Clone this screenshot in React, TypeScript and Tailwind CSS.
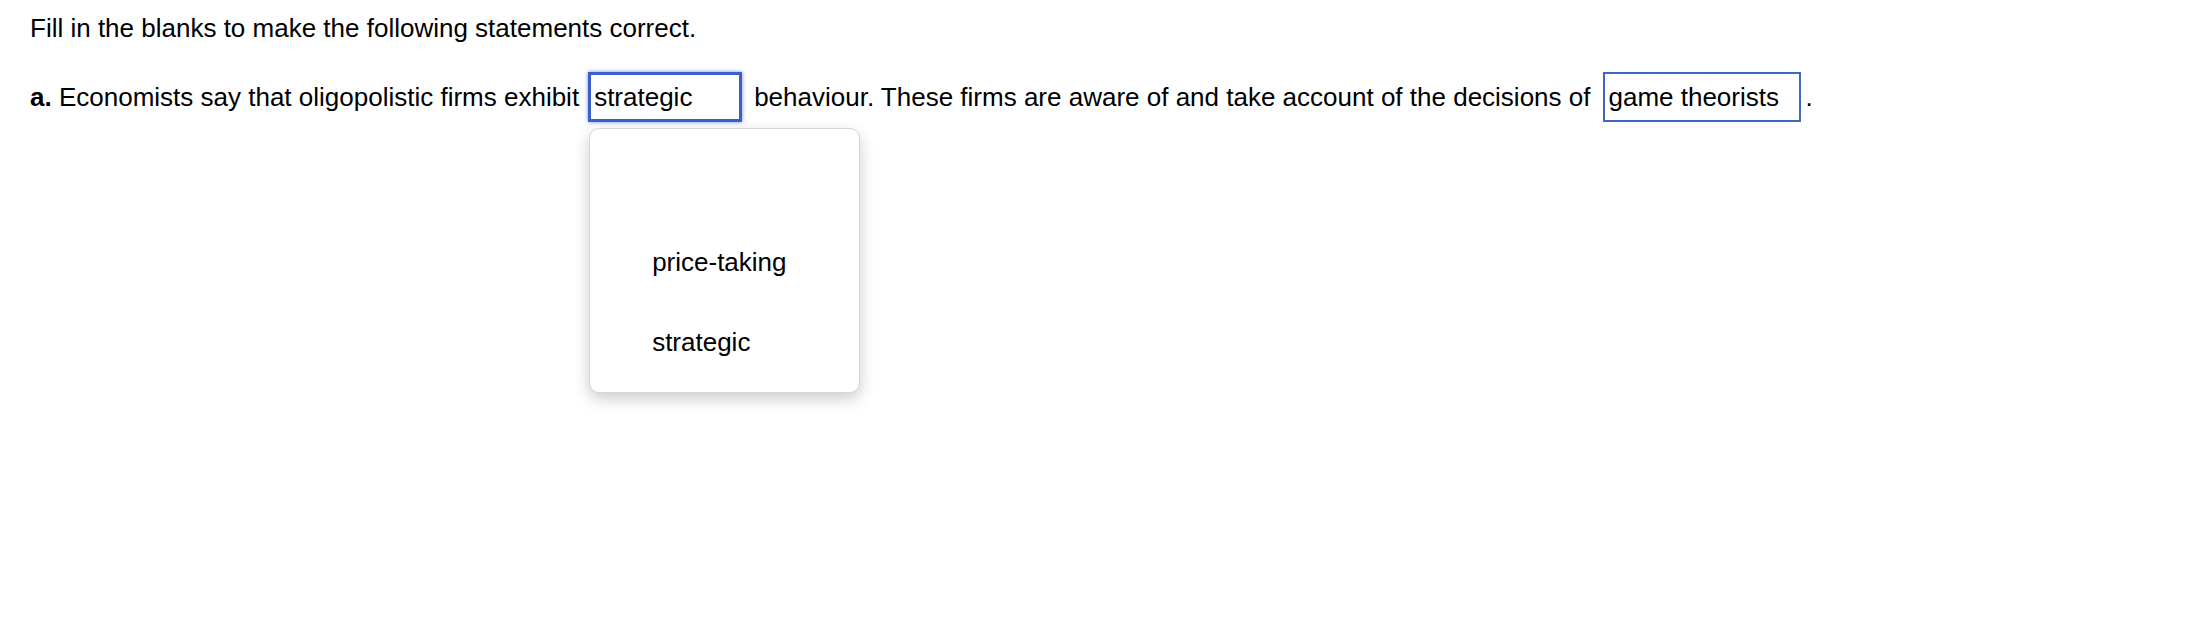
import React from "react";

export default function App() {
  const font = { fontFamily: '"Liberation Sans", Arial, Helvetica, sans-serif' };
  return (
    <div className="w-[2189px] h-[620px] bg-white text-black text-[26px] pt-[13px] pl-[30px]" style={font}>
      <div className="leading-[30px] whitespace-nowrap">Fill in the blanks to make the following statements correct.</div>
      <div className="mt-[29px] h-[50px] flex items-center whitespace-nowrap leading-[30px]">
        <span>
          <b>a.</b> Economists say that oligopolistic firms exhibit
        </span>
        <div className="relative ml-[9px]">
          <div className="w-[154px] h-[50px] border-[3px] border-[#3a5fcd] shadow-[0_0_4px_rgba(58,95,205,0.7)] pl-[3px] flex items-center bg-white">
            strategic
          </div>
          <div className="absolute left-[1px] top-[56px] w-[271px] h-[265px] bg-white border border-[#d6d6d6] rounded-[10px] shadow-[0_6px_16px_rgba(0,0,0,0.2)] pt-[13px] pb-[11px] pl-[62px] z-10">
            <div className="h-[80px] leading-[80px]">&nbsp;</div>
            <div className="h-[80px] leading-[80px]">price-taking</div>
            <div className="h-[80px] leading-[80px]">strategic</div>
          </div>
        </div>
        <span className="ml-[12px]">behaviour. These firms are aware of and take account of the decisions of</span>
        <div className="ml-[13px] w-[198px] h-[50px] border-2 border-[#3f66c4] pl-[3px] flex items-center">game theorists</div>
        <span className="ml-[4px]">.</span>
      </div>
    </div>
  );
}
